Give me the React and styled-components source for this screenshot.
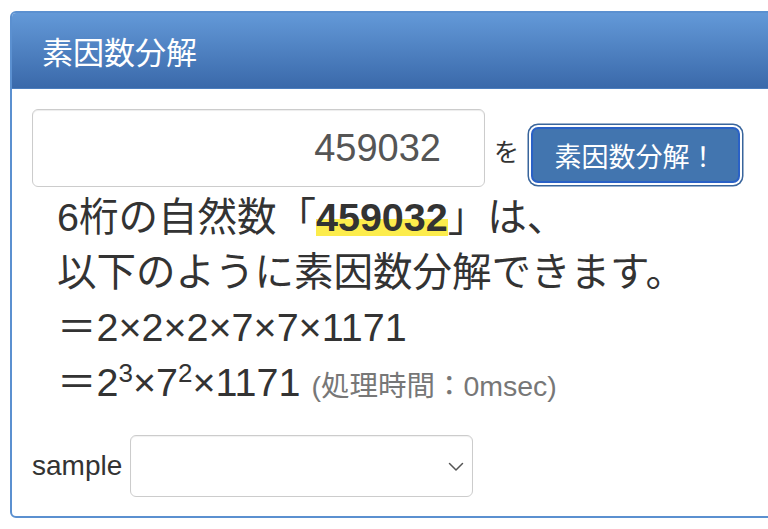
import React from "react";
import styled, { createGlobalStyle } from "styled-components";

const GlobalStyle = createGlobalStyle`
  html, body { margin: 0; padding: 0; background: #fff; overflow: hidden; }
  body { font-family: "Liberation Sans", "Noto Sans CJK JP", sans-serif; color: #333; }
`;

const FONT = `"Liberation Sans", "Noto Sans CJK JP", sans-serif`;

export default function App() {
  return (
    <>
      <GlobalStyle />
      <Page>
        <Panel>
          <PanelHeader>
            <Title>素因数分解</Title>
          </PanelHeader>
          <PanelBody>
            <InputRow>
              <NumberInput type="text" defaultValue="459032" />
              <Particle>を</Particle>
              <SubmitButton type="button">素因数分解！</SubmitButton>
            </InputRow>
            <Result>
              <Line>
                6桁の自然数「<Marker>459032</Marker>」は、
              </Line>
              <Line>以下のように素因数分解できます。</Line>
              <Line>＝2×2×2×7×7×1171</Line>
              <Line>
                ＝2<Sup>3</Sup>×7<Sup>2</Sup>×1171 <Elapsed>(処理時間：0msec)</Elapsed>
              </Line>
            </Result>
            <SampleRow>
              <SampleLabel>sample</SampleLabel>
              <SelectBox>
                <Chevron width="16" height="10" viewBox="0 0 16 10">
                  <path d="M1.5 1.5 L8 8 L14.5 1.5" fill="none" stroke="#555" strokeWidth="1.5" strokeLinecap="round" strokeLinejoin="round" />
                </Chevron>
              </SelectBox>
            </SampleRow>
          </PanelBody>
        </Panel>
      </Page>
    </>
  );
}

const Page = styled.div`
  padding: 11px 0 0 10px;
`;

const Panel = styled.div`
  width: 820px;
  border: 2px solid #5b90d0;
  border-radius: 6px;
  overflow: hidden;
  background: #fff;
`;

const PanelHeader = styled.div`
  height: 75px;
  display: flex;
  align-items: center;
  padding-left: 30px;
  background: linear-gradient(#6399d8, #3a69aa);
  border-bottom: 1px solid #4b7dbd;
`;

const Title = styled.h3`
  margin: 0;
  font-family: ${FONT};
  font-weight: normal;
  font-size: 31px;
  color: #fff;
`;

const PanelBody = styled.div`
  padding: 20px 20px 19px 20px;
`;

const InputRow = styled.div`
  display: flex;
  align-items: flex-end;
`;

const NumberInput = styled.input`
  box-sizing: border-box;
  width: 453px;
  height: 78px;
  padding: 0 43px 0 12px;
  border: 1px solid #ccc;
  border-radius: 6px;
  box-shadow: inset 0 1px 1px rgba(0, 0, 0, 0.075);
  font-family: ${FONT};
  font-size: 38px;
  color: #555;
  text-align: right;
  outline: none;
`;

const Particle = styled.span`
  font-size: 25px;
  line-height: 25px;
  margin: 0 12px 0 9px;
  padding-bottom: 22px;
  color: #333;
`;

const SubmitButton = styled.button`
  box-sizing: border-box;
  width: 209px;
  height: 56px;
  margin-bottom: 4px;
  border: 2px solid #2a61c6;
  border-radius: 7px;
  background: #4275af;
  color: #fff;
  font-family: ${FONT};
  font-size: 27px;
  padding: 0;
  box-shadow: 0 0 0 2px #fff, 0 0 0 3.5px #39659c;
`;

const Result = styled.div`
  margin-top: 3px;
  padding-left: 25px;
  font-size: 39.5px;
  line-height: 55px;
  color: #333;
`;

const Line = styled.div`
  white-space: nowrap;
`;

const Marker = styled.strong`
  font-weight: bold;
  background: linear-gradient(transparent 55%, #fcec4c 55%, #fcec4c 93%, transparent 93%);
`;

const Sup = styled.sup`
  font-size: 26px;
  line-height: 0;
  vertical-align: 14px;
`;

const Elapsed = styled.small`
  font-size: 28.5px;
  color: #777;
`;

const SampleRow = styled.div`
  display: flex;
  align-items: center;
  margin-top: 21px;
`;

const SampleLabel = styled.span`
  font-size: 28px;
  color: #333;
  margin-right: 8px;
`;

const SelectBox = styled.div`
  position: relative;
  box-sizing: border-box;
  width: 343px;
  height: 62px;
  border: 1px solid #ccc;
  border-radius: 6px;
  background: #fff;
  box-shadow: inset 0 1px 1px rgba(0, 0, 0, 0.06);
`;

const Chevron = styled.svg`
  position: absolute;
  right: 8px;
  top: 26px;
`;
